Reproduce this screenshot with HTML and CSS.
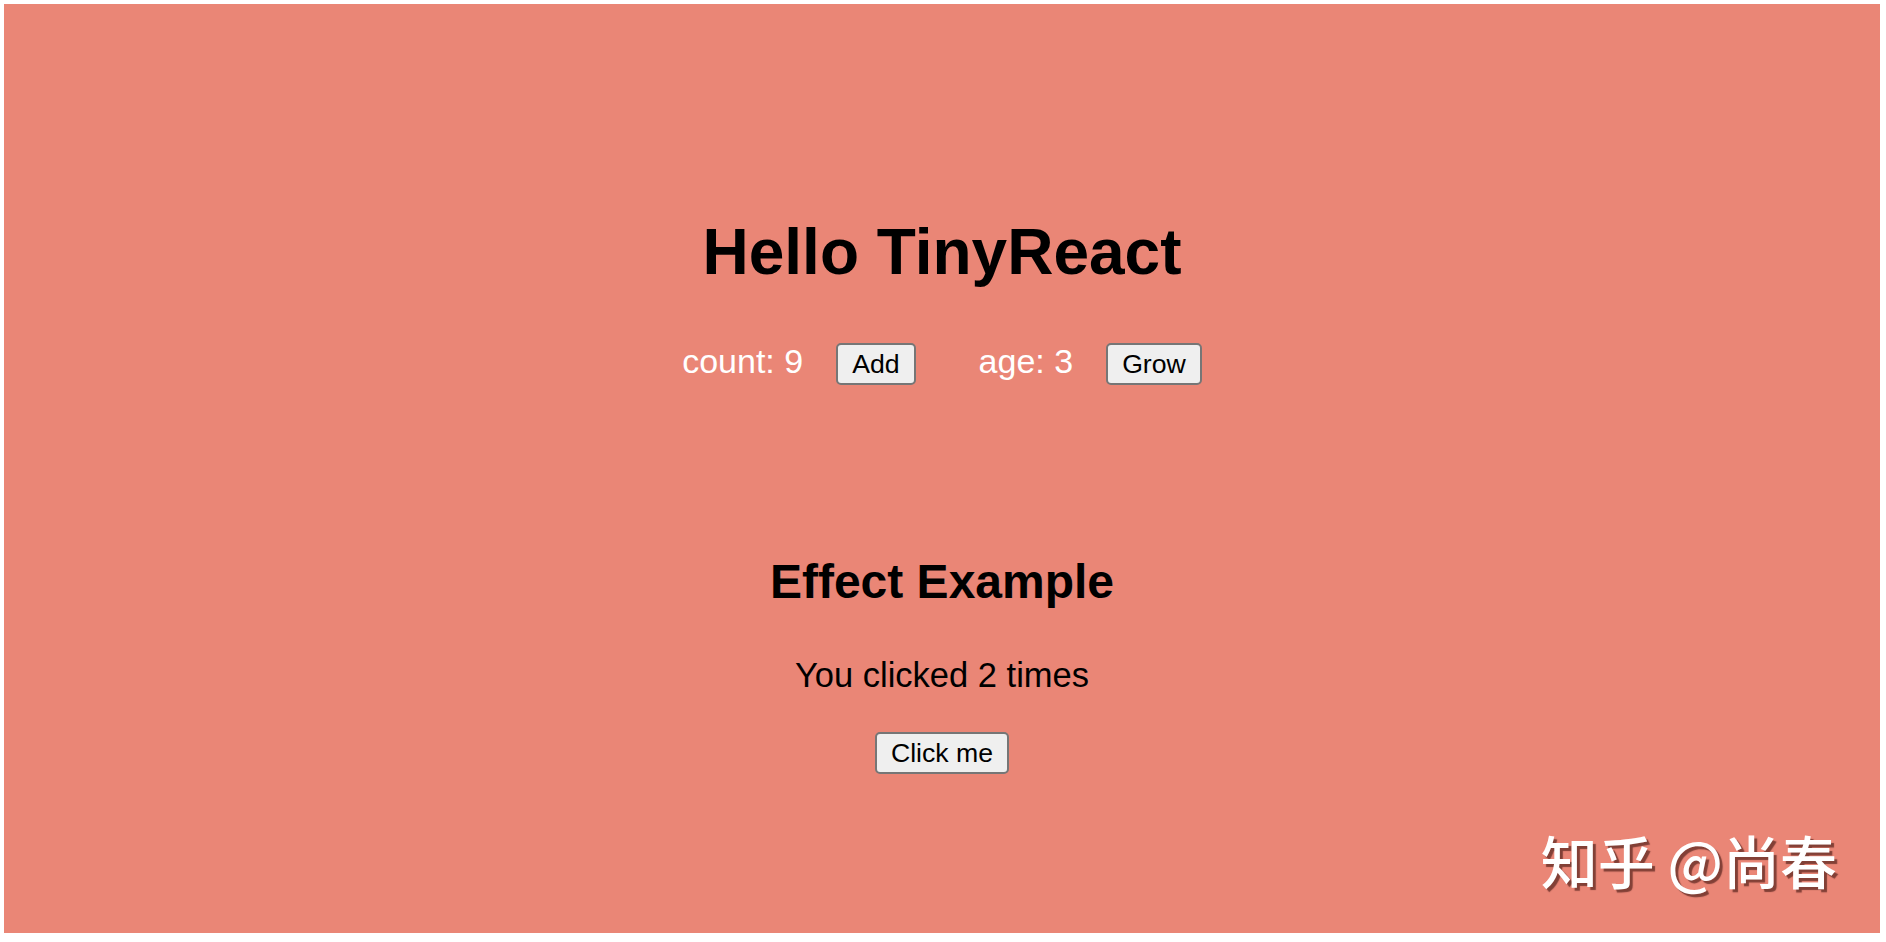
FILE: index.html
```html
<!DOCTYPE html>
<html lang="zh">
<head>
<meta charset="utf-8">
<title>Hello TinyReact</title>
<link rel="stylesheet" href="styles.css">
</head>
<body>
<div class="frame">
  <main class="app">
    <h1 class="title">Hello TinyReact</h1>
    <div class="counters">
      <div class="counter"><span class="label">count: 9</span><button class="btn">Add</button></div>
      <div class="counter"><span class="label">age: 3</span><button class="btn">Grow</button></div>
    </div>
    <section class="effect">
      <h2 class="effect-title">Effect Example</h2>
      <p class="effect-text">You clicked 2 times</p>
      <button class="btn">Click me</button>
    </section>
  </main>
  <div class="watermark">知乎 @尚春</div>
</div>
</body>
</html>
```
FILE: styles.css
```css
html, body {
  margin: 0;
  padding: 0;
  background: #ffffff;
}

body {
  width: 1886px;
  height: 942px;
  overflow: hidden;
}

.frame {
  position: relative;
  margin: 4px 6px 0 4px;
  height: 929px;
  background: #ea8676;
  font-family: "Liberation Sans", Arial, Helvetica, sans-serif;
  color: #000;
}

.app {
  display: flex;
  flex-direction: column;
  align-items: center;
  padding-top: 211px;
}

.title {
  margin: 0;
  font-size: 64px;
  line-height: 74px;
  font-weight: bold;
}

.counters {
  display: flex;
  align-items: baseline;
  gap: 63px;
  margin-top: 54px;
}

.counter {
  display: flex;
  align-items: baseline;
  gap: 33px;
}

.label {
  font-size: 34px;
  line-height: 37px;
  color: #ffffff;
}

.btn {
  font-family: "Liberation Sans", Arial, Helvetica, sans-serif;
  font-size: 26.67px;
  line-height: normal;
  padding: 4px 14px 3px;
  color: #000;
  background: #efefef;
  border: 2px solid #767676;
  border-radius: 5px;
}

.effect {
  display: flex;
  flex-direction: column;
  align-items: center;
  margin-top: 169px;
}

.effect-title {
  margin: 0;
  font-size: 48px;
  line-height: 55px;
  font-weight: bold;
}

.effect-text {
  margin: 48px 0 38px;
  font-size: 34.5px;
  line-height: 37px;
}

.watermark {
  position: absolute;
  right: 43px;
  bottom: 45px;
  font-family: "Noto Sans CJK SC", "Noto Sans", sans-serif;
  font-size: 57px;
  line-height: 1;
  font-weight: 500;
  color: #ffffff;
  text-shadow: 3px 3px 1px rgba(95, 40, 34, 0.75);
  white-space: nowrap;
}
```
